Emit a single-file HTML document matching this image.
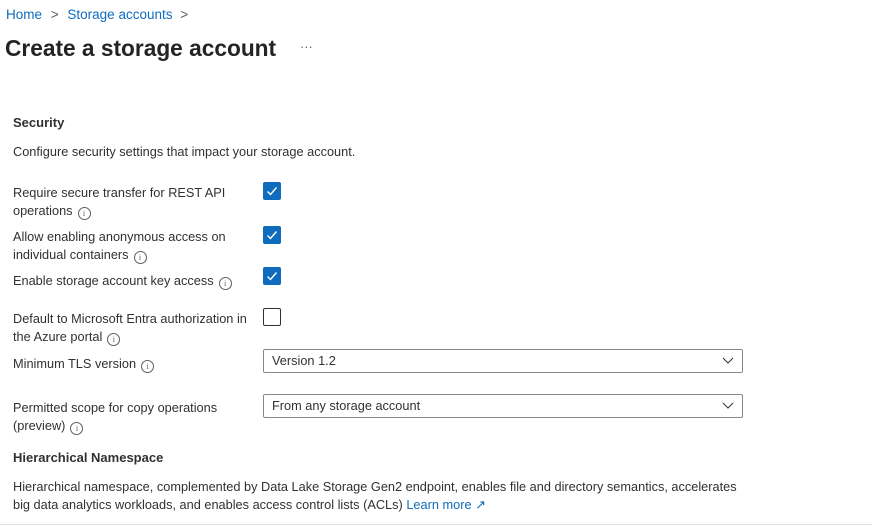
<!DOCTYPE html>
<html><head><style>
body{margin:0;width:872px;height:529px;background:#fff;font-family:"Liberation Sans",sans-serif;color:#323130;position:relative;overflow:hidden}
.a{position:absolute;white-space:nowrap;font-size:12.75px;line-height:18px}
.b{font-weight:bold}
.cb{position:absolute;left:263px;width:18px;height:18px;border-radius:2px;background:#0f6cbd}
.cb svg{position:absolute;left:3px;top:3px}
.cb.off{background:#fff;border:1px solid #323130;width:16px;height:16px}
.i{display:inline-block;width:11px;height:11px;border:1px solid #605e5c;border-radius:50%;font-size:8px;line-height:11px;text-align:center;vertical-align:-1px;margin-left:5px;color:#605e5c;font-family:"Liberation Serif",serif}
.dd{position:absolute;left:263px;width:478px;height:22px;border:1px solid #8a8886;border-radius:2px;font-size:12.75px;line-height:22px;text-indent:8px}
.dd svg{position:absolute;right:8px;top:7px}
</style></head><body>
<div class="a" style="left:6px;top:6px;font-size:13.5px;color:#0f6cbd">Home <span style="color:#605e5c;margin:0 5px">&gt;</span> Storage accounts <span style="color:#605e5c;margin-left:4px">&gt;</span></div>
<div class="a" style="left:5px;top:34px;font-size:22.7px;line-height:28px;font-weight:bold;color:#242424">Create a storage account</div>
<div class="a" style="left:300px;top:38px;color:#605e5c">···</div>
<div class="a b" style="left:13px;top:114px;font-size:13px">Security</div>
<div class="a" style="left:13px;top:143px">Configure security settings that impact your storage account.</div>
<div class="a" style="left:13px;top:184px">Require secure transfer for REST API<br>operations<span class="i">i</span></div>
<div class="a" style="left:13px;top:228px">Allow enabling anonymous access on<br>individual containers<span class="i">i</span></div>
<div class="a" style="left:13px;top:272px">Enable storage account key access<span class="i">i</span></div>
<div class="a" style="left:13px;top:310px">Default to Microsoft Entra authorization in<br>the Azure portal<span class="i">i</span></div>
<div class="a" style="left:13px;top:355px">Minimum TLS version<span class="i">i</span></div>
<div class="a" style="left:13px;top:399px">Permitted scope for copy operations<br>(preview)<span class="i">i</span></div>
<div class="cb" style="top:182px"><svg width="12" height="12"><path d="M1.5 6.5l3 3 6-7" stroke="#fff" stroke-width="1.4" fill="none"/></svg></div>
<div class="cb" style="top:226px"><svg width="12" height="12"><path d="M1.5 6.5l3 3 6-7" stroke="#fff" stroke-width="1.4" fill="none"/></svg></div>
<div class="cb" style="top:267px"><svg width="12" height="12"><path d="M1.5 6.5l3 3 6-7" stroke="#fff" stroke-width="1.4" fill="none"/></svg></div>
<div class="cb off" style="top:308px"></div>
<div class="dd" style="top:349px">Version 1.2<svg width="12" height="8"><path d="M1 1l5 5 5-5" stroke="#323130" fill="none"/></svg></div>
<div class="dd" style="top:394px">From any storage account<svg width="12" height="8"><path d="M1 1l5 5 5-5" stroke="#323130" fill="none"/></svg></div>
<div class="a b" style="left:13px;top:449px;font-size:13px">Hierarchical Namespace</div>
<div class="a" style="left:13px;top:478px">Hierarchical namespace, complemented by Data Lake Storage Gen2 endpoint, enables file and directory semantics, accelerates<br>big data analytics workloads, and enables access control lists (ACLs) <span style="color:#0f6cbd">Learn more ↗</span></div>
<div style="position:absolute;left:0;top:524px;width:872px;height:1px;background:#e1dfdd"></div>
</body></html>
